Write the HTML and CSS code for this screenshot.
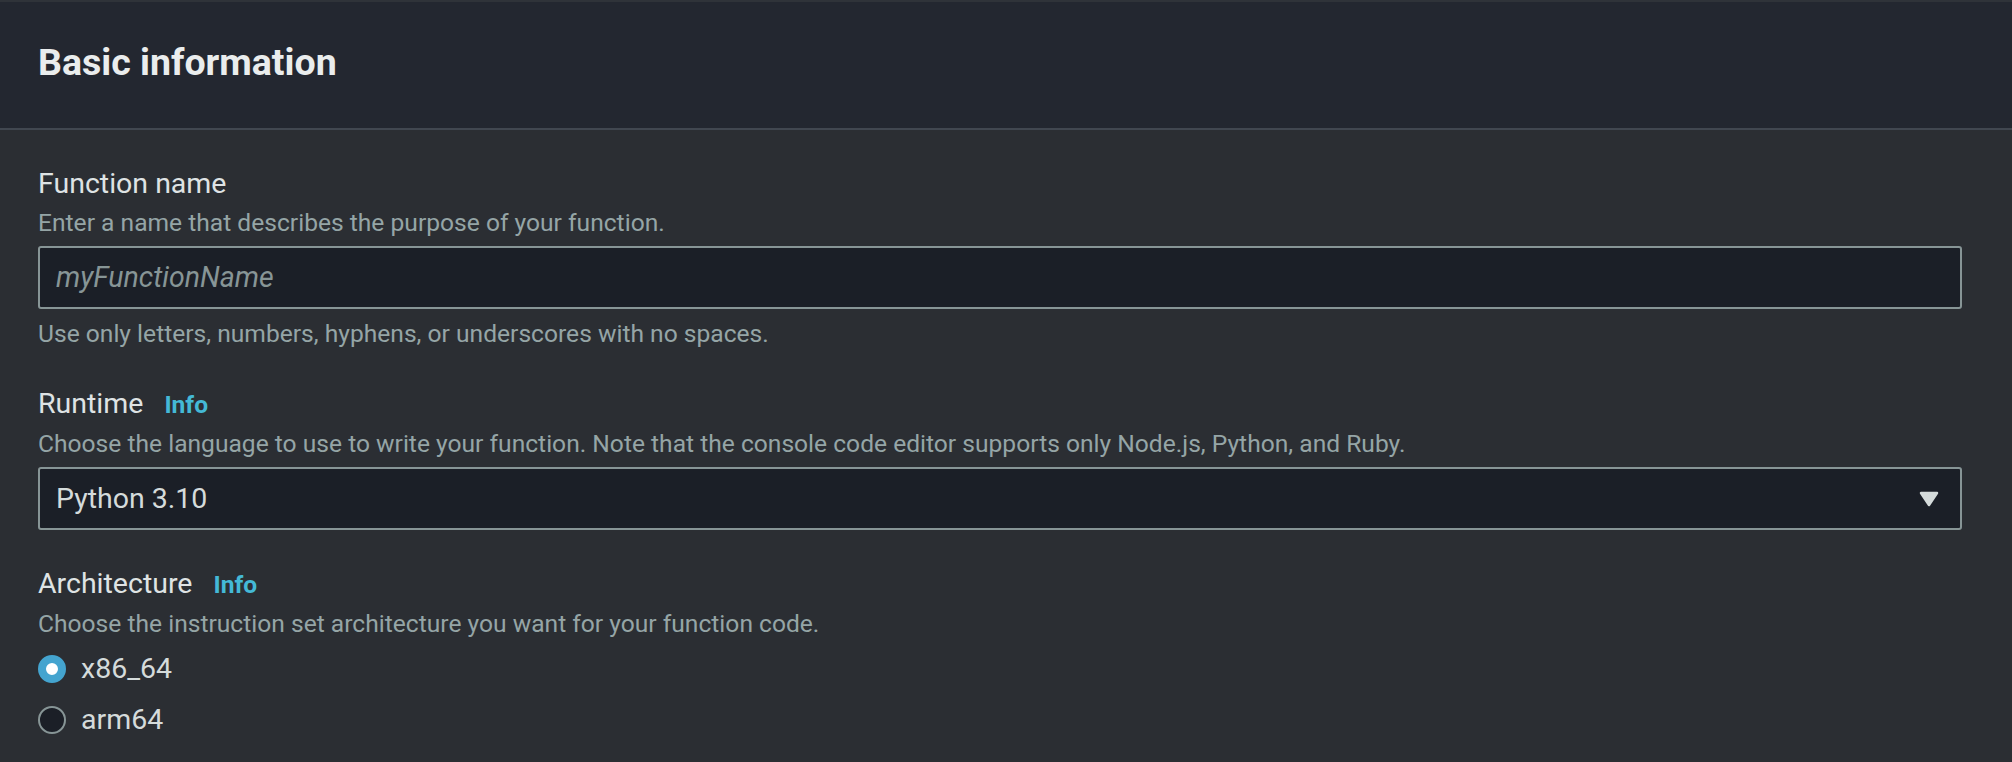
FILE: index.html
```html
<!DOCTYPE html>
<html lang="en">
<head>
<meta charset="utf-8">
<title>Basic information</title>
<link rel="stylesheet" href="styles.css">
</head>
<body>
<div class="panel">
  <div class="panel-header">
    <h2 class="panel-title">Basic information</h2>
  </div>
  <div class="panel-body">
    <div class="field">
      <div class="label">Function name</div>
      <div class="desc">Enter a name that describes the purpose of your function.</div>
      <input class="text-input" type="text" placeholder="myFunctionName">
      <div class="constraint">Use only letters, numbers, hyphens, or underscores with no spaces.</div>
    </div>
    <div class="field">
      <div class="label">Runtime<a class="info" href="#">Info</a></div>
      <div class="desc">Choose the language to use to write your function. Note that the console code editor supports only Node.js, Python, and Ruby.</div>
      <div class="select">
        <span class="select-value">Python 3.10</span>
        <svg class="caret" width="20" height="16" viewBox="0 0 20 16" aria-hidden="true"><path d="M2 2 L18 2 L10 14 Z" fill="#d5dbdb" stroke="#d5dbdb" stroke-width="2.5" stroke-linejoin="round"/></svg>
      </div>
    </div>
    <div class="field">
      <div class="label">Architecture<a class="info" href="#">Info</a></div>
      <div class="desc">Choose the instruction set architecture you want for your function code.</div>
      <div class="radios">
        <div class="radio-row"><span class="radio checked"></span><span class="radio-label">x86_64</span></div>
        <div class="radio-row"><span class="radio"></span><span class="radio-label">arm64</span></div>
      </div>
    </div>
  </div>
</div>
</body>
</html>
```
FILE: styles.css
```css
html, body {
  margin: 0;
  padding: 0;
  background: #2b2e33;
}
body {
  font-family: Roboto, "Noto Sans", Arial, sans-serif;
  color: #d5dbdb;
  width: 2012px;
  height: 762px;
  overflow: hidden;
}
.panel {
  min-height: 762px;
  background: #2b2e33;
}
.panel-header {
  background: #232730;
  border-top: 2px solid #2f3339;
  border-bottom: 2px solid #414750;
  padding: 38px 50px 44px 38px;
}
.panel-title {
  margin: 0;
  font-size: 37.5px;
  font-weight: 700;
  line-height: 44px;
  color: #eaeded;
}
.panel-body {
  padding: 34px 50px 0 38px;
  display: flex;
  flex-direction: column;
  gap: 34px;
}
.field {
  display: flex;
  flex-direction: column;
}
.label {
  font-size: 28.5px;
  line-height: 40px;
  color: #dfe3e4;
}
.info {
  margin-left: 21px;
  font-size: 24.6px;
  font-weight: 700;
  color: #44b9d6;
  text-decoration: none;
}
.desc {
  margin-top: 3px;
  font-size: 24.6px;
  line-height: 32px;
  color: #95a5a6;
}
.text-input,
.select {
  box-sizing: border-box;
  margin-top: 7px;
  width: 100%;
  height: 63px;
  border: 2px solid #879596;
  border-radius: 3px;
  background: #1b1f27;
  font-family: Roboto, "Noto Sans", Arial, sans-serif;
  font-size: 28.5px;
  color: #d5dbdb;
}
.text-input {
  display: block;
  padding: 0 16px;
  outline: none;
}
.text-input::placeholder {
  color: #879596;
  font-style: italic;
  opacity: 1;
}
.constraint {
  margin-top: 9px;
  font-size: 24.6px;
  line-height: 32px;
  color: #95a5a6;
}
.select {
  display: flex;
  align-items: center;
  justify-content: space-between;
  padding: 0 21px 0 16px;
}
.select-value {
  line-height: 40px;
}
.caret {
  display: block;
}
.radios {
  margin-top: 9px;
  display: flex;
  flex-direction: column;
  gap: 11px;
}
.radio-row {
  display: flex;
  align-items: center;
  height: 40px;
}
.radio {
  box-sizing: border-box;
  width: 28px;
  height: 28px;
  border-radius: 50%;
  border: 2px solid #879596;
  background: #1b1f27;
  flex: none;
}
.radio.checked {
  border: 8.5px solid #44a4cf;
  background: #ffffff;
}
.radio-label {
  margin-left: 15px;
  font-size: 28.5px;
  line-height: 40px;
  color: #d5dbdb;
}
```
